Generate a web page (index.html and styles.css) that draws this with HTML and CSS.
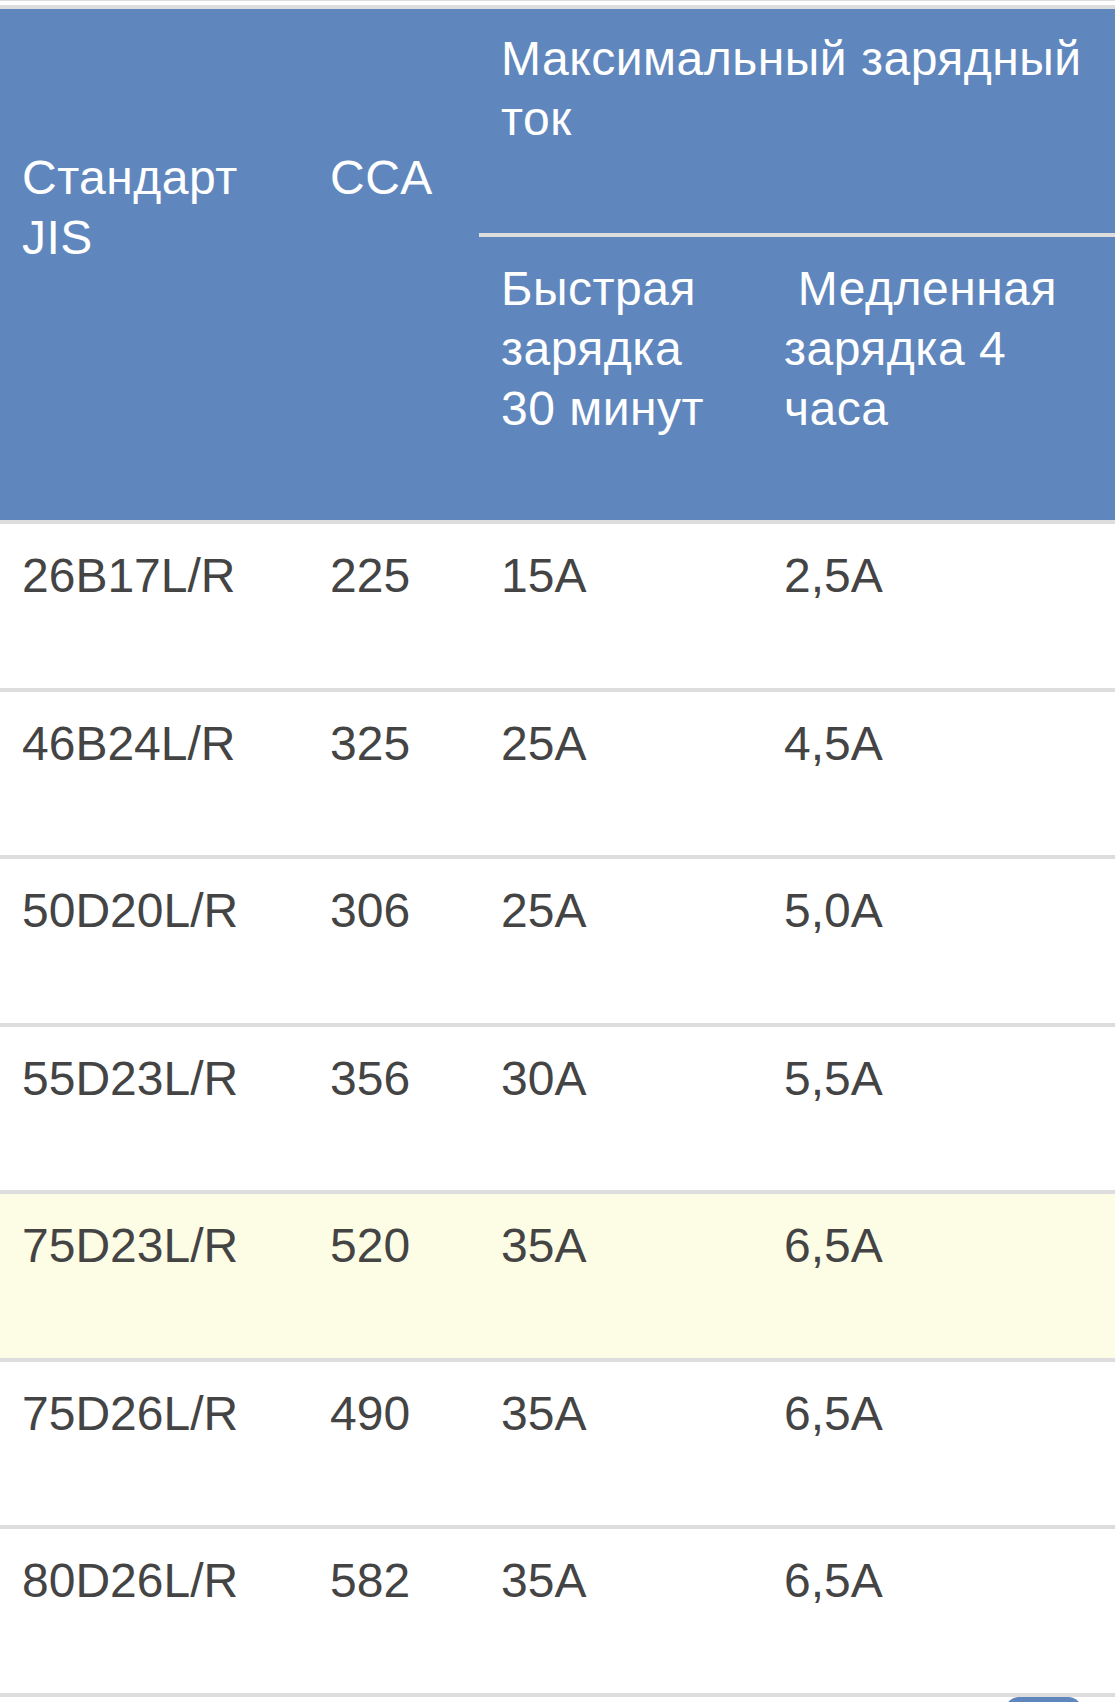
FILE: index.html
```html
<!DOCTYPE html>
<html lang="ru">
<head>
<meta charset="utf-8">
<title>Таблица JIS</title>
<link rel="stylesheet" href="styles.css">
</head>
<body>
<div class="page">
  <table class="spec">
    <colgroup>
      <col class="c1"><col class="c2"><col class="c3"><col class="c4">
    </colgroup>
    <thead>
      <tr>
        <th rowspan="2" class="span">Стандарт JIS</th>
        <th rowspan="2" class="span">CCA</th>
        <th colspan="2" class="group">Максимальный зарядный ток</th>
      </tr>
      <tr>
        <th class="sub">Быстрая зарядка 30 минут</th>
        <th class="sub">&nbsp;Медленная зарядка 4 часа</th>
      </tr>
    </thead>
    <tbody>
      <tr><td>26B17L/R</td><td>225</td><td>15A</td><td>2,5A</td></tr>
      <tr><td>46B24L/R</td><td>325</td><td>25A</td><td>4,5A</td></tr>
      <tr><td>50D20L/R</td><td>306</td><td>25A</td><td>5,0A</td></tr>
      <tr><td>55D23L/R</td><td>356</td><td>30A</td><td>5,5A</td></tr>
      <tr class="hl"><td>75D23L/R</td><td>520</td><td>35A</td><td>6,5A</td></tr>
      <tr><td>75D26L/R</td><td>490</td><td>35A</td><td>6,5A</td></tr>
      <tr><td>80D26L/R</td><td>582</td><td>35A</td><td>6,5A</td></tr>
    </tbody>
  </table>
  <div class="bar"><div class="topbtn"></div></div>
</div>
</body>
</html>
```

FILE: styles.css
```css
html, body {
  margin: 0;
  padding: 0;
  background: #ffffff;
}

.page {
  width: 1115px;
  border-top: 1px solid #dddddd;
  padding-top: 4px;
  font-family: "Liberation Sans", Arial, Helvetica, sans-serif;
  font-size: 48px;
  line-height: 60px;
  color: #444444;
  overflow: hidden;
}

.spec {
  width: 1115px;
  table-layout: fixed;
  border-collapse: separate;
  border-spacing: 0;
  border-top: 4px solid #dddddd;
}

.c1 { width: 308px; }
.c2 { width: 171px; }
.c3 { width: 283px; }
.c4 { width: 353px; }

.spec th {
  background: #5f87bd;
  color: #ffffff;
  font-weight: normal;
  text-align: left;
  vertical-align: top;
  letter-spacing: 0.5px;
}

.spec th.span {
  padding: 139px 22px 0 22px;
  border-bottom: 4px solid #dddddd;
}

.spec th.group {
  padding: 20px 22px 84px 22px;
  border-bottom: 4px solid #dddddd;
}

.spec th.sub {
  padding: 22px 22px 81px 22px;
  border-bottom: 4px solid #dddddd;
}

.spec td {
  padding: 22px 22px 81.5px 22px;
  vertical-align: top;
  border-bottom: 4px solid #dddddd;
  white-space: nowrap;
}

.spec tr.hl td {
  background: #fdfde6;
}

.bar {
  display: flex;
  justify-content: flex-end;
  padding-right: 33px;
}

.topbtn {
  width: 77px;
  height: 30px;
  background: #5f87bd;
  border-radius: 14px 14px 0 0;
}
```
